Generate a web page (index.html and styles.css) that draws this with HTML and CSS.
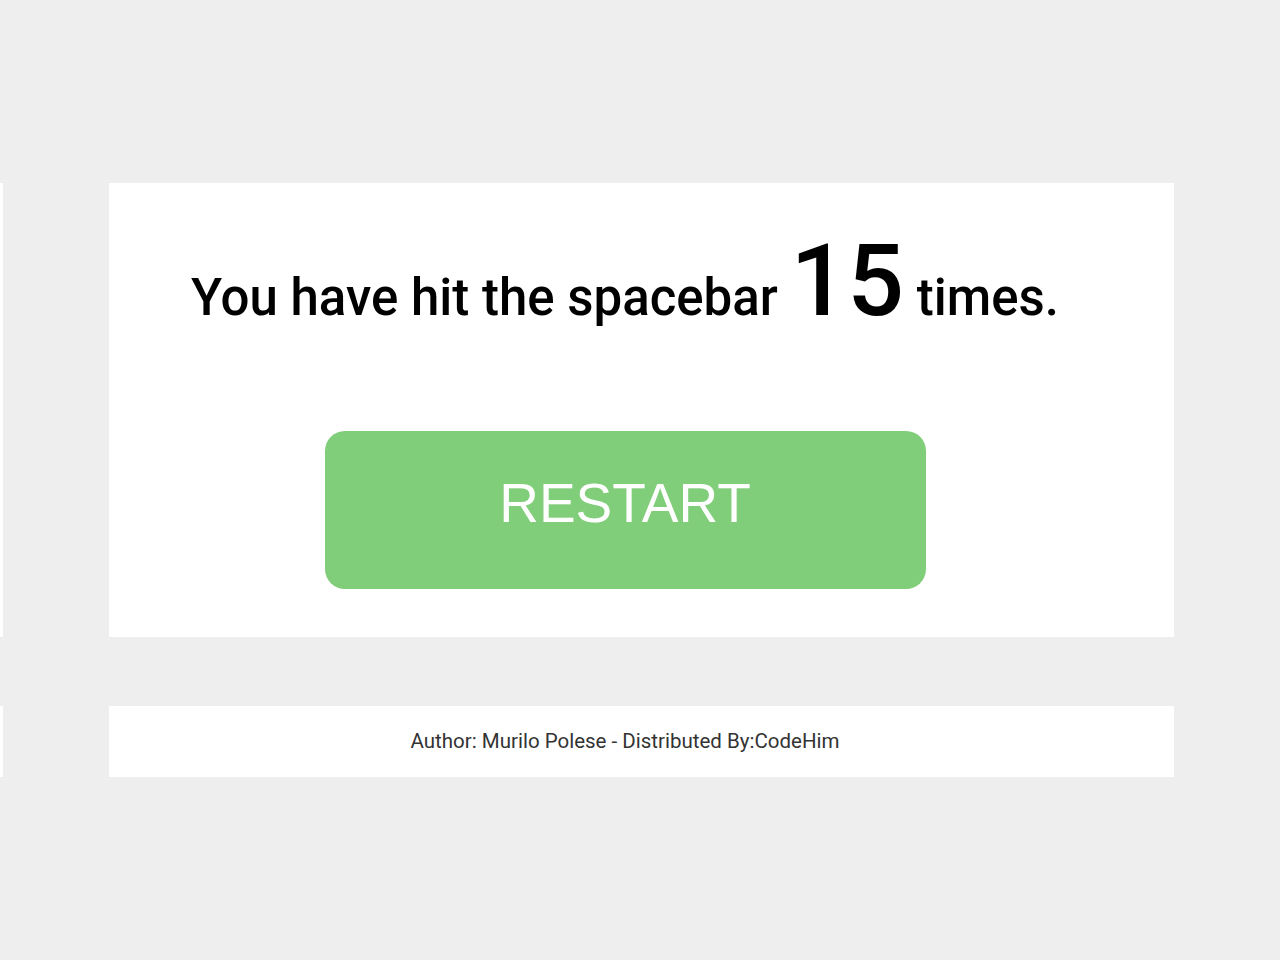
FILE: index.html
```html
<!DOCTYPE html>
<html lang="en">
<head>
  <meta charset="UTF-8">
  <meta name="viewport" content="width=device-width, initial-scale=1.0">
  <title>Spacebar Counter</title>
  <link rel="stylesheet" href="styles.css">
</head>
<body>
  <div class="container">
    <div class="card">
      <h1 class="counter">You have hit the spacebar <span id="count">15</span> times.</h1>
      <button class="restart" id="restart">RESTART</button>
    </div>

    <div class="card footer">
      Author: Murilo Polese - Distributed By:CodeHim
    </div>
  </div>
</body>
</html>
```

FILE: styles.css
```css
body {
  margin: 0;
  font-family: Roboto, "Liberation Sans", Arial, sans-serif;
  background-color: #eeeeee;
}
.container {
  padding: 183px 106px 0 109px;
}
.card {
  background-color: white;
  padding-right: 33px;
  box-shadow: -1171px 0 0 white;
  text-align: center;
}
.counter {
  margin: 0;
  padding-top: 60px;
  font-size: 51px;
  font-weight: 500;
  color: #000;
  line-height: 76px;
}
#count {
  font-size: 100px;
  font-weight: 500;
}
.restart {
  display: block;
  width: 601px;
  height: 158px;
  margin: 95px auto 0;
  padding: 0 0 14px;
  background-color: #80cd7a;
  color: white;
  border: none;
  border-radius: 20px;
  font-family: "Liberation Sans", Arial, sans-serif;
  font-size: 55px;
  cursor: pointer;
}
.card:first-child {
  padding-bottom: 48px;
}
.footer {
  margin-top: 69px;
  height: 71px;
  line-height: 71px;
  font-size: 20.5px;
  color: #333;
}
```
